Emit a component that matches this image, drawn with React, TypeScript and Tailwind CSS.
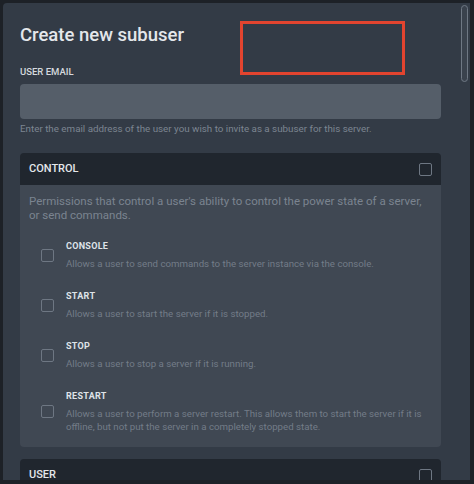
import { useState } from 'react';

type Permission = { key: string; title: string; description: string };

const controlPermissions: Permission[] = [
  { key: 'console', title: 'CONSOLE', description: 'Allows a user to send commands to the server instance via the console.' },
  { key: 'start', title: 'START', description: 'Allows a user to start the server if it is stopped.' },
  { key: 'stop', title: 'STOP', description: 'Allows a user to stop a server if it is running.' },
  {
    key: 'restart',
    title: 'RESTART',
    description:
      'Allows a user to perform a server restart. This allows them to start the server if it is offline, but not put the server in a completely stopped state.',
  },
];

function Box({ checked, onClick }: { checked?: boolean; onClick?: () => void }) {
  return (
    <button
      type="button"
      onClick={onClick}
      className={`h-[13px] w-[13px] shrink-0 rounded-[2px] border border-[#6e7783] ${checked ? 'bg-[#3b82f6]' : 'bg-transparent'}`}
    />
  );
}

export default function App() {
  const [checked, setChecked] = useState<Record<string, boolean>>({});
  const toggle = (k: string) => setChecked((c) => ({ ...c, [k]: !c[k] }));

  return (
    <div
      className="relative h-[484px] w-[474px] overflow-hidden bg-[#1d2127] pl-[3px] pt-[3px]"
      style={{ fontFamily: 'Roboto, "Noto Sans", sans-serif' }}
    >
      <div className="h-[477px] w-[467px] overflow-hidden rounded-tl-[4px] bg-[#333b46] pl-[17px] pr-[29px] pt-[18px]">
        <h2 className="text-[18.5px] font-medium leading-[28px] text-[#e4e7eb]">Create new subuser</h2>

        <label className="mt-[16px] block text-[9.5px] font-medium uppercase leading-[14px] text-[#d5d9de]">
          User Email
        </label>
        <input
          type="email"
          className="mt-[5px] block h-[35px] w-full rounded-[4px] bg-[#555e69] px-3 text-sm text-white outline-none"
        />
        <p className="mt-[3px] text-[9.8px] leading-[14px] text-[#7c8591]">
          Enter the email address of the user you wish to invite as a subuser for this server.
        </p>

        <div className="mt-[17px] overflow-hidden rounded-[4px]">
          <div className="flex h-[32px] items-center justify-between bg-[#20262e] px-[9px]">
            <span className="text-[11px] font-medium text-[#e4e7eb]">CONTROL</span>
            <Box checked={checked.control} onClick={() => toggle('control')} />
          </div>
          <div className="bg-[#404853] pb-[14px] pl-[9px] pr-[10px] pt-[9px]">
            <p className="pr-[7px] text-[11.5px] leading-[14px] text-[#7b8490]">
              Permissions that control a user's ability to control the power state of a server, or send commands.
            </p>
            <div className="mt-[18px] flex flex-col gap-[20px]">
              {controlPermissions.map((p) => (
                <div key={p.key} className="flex items-center pl-[12px]">
                  <Box checked={checked[p.key]} onClick={() => toggle(p.key)} />
                  <div className="ml-[12px]">
                    <div className="text-[9px] font-bold leading-[12px] tracking-[0.3px] text-[#dfe3e8]">{p.title}</div>
                    <div className="mt-[5px] text-[9.7px] leading-[13px] text-[#737c88]">{p.description}</div>
                  </div>
                </div>
              ))}
            </div>
          </div>
        </div>

        <div className="mt-[12px] flex h-[32px] items-center justify-between rounded-t-[4px] bg-[#20262e] px-[9px]">
          <span className="text-[11px] font-medium text-[#e4e7eb]">USER</span>
          <Box checked={checked.user} onClick={() => toggle('user')} />
        </div>
      </div>

      {/* annotation rectangle */}
      <div className="absolute left-[240px] top-[21px] h-[54px] w-[165px] border-[3px] border-[#e2442f]" />

      {/* scrollbar */}
      <div className="absolute left-[461px] top-[5px] h-[77px] w-[7px] rounded-full border border-[#6f7884] bg-[#3a424d]" />
    </div>
  );
}
